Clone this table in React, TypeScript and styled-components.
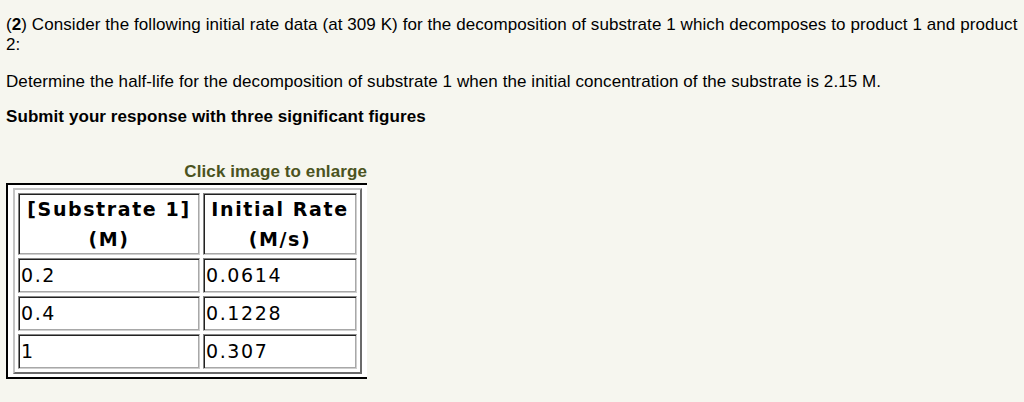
import React from "react";
import styled, { createGlobalStyle } from "styled-components";

const Global = createGlobalStyle`
  html, body { margin: 0; padding: 0; background: #f6f6ef; }
  body { font-family: "Liberation Sans", Arial, Helvetica, sans-serif; color: #000; }
`;

const Page = styled.div`
  display: flex;
  flex-direction: column;
  align-items: flex-start;
  padding: 15px 2px 0 6px;
  width: 1024px;
  box-sizing: border-box;
`;

const Para = styled.p<{ $gap: number; $bold?: boolean }>`
  margin: 0 0 ${(p) => p.$gap}px 0;
  font-size: 17px;
  line-height: 20px;
  letter-spacing: 0.08px;
  font-weight: ${(p) => (p.$bold ? 700 : 400)};
  align-self: stretch;
`;

const Strong = styled.span`
  font-weight: 700;
`;

const Figure = styled.div`
  display: flex;
  flex-direction: column;
  align-items: stretch;
`;

const Caption = styled.div`
  text-align: right;
  font-size: 17px;
  line-height: 20px;
  font-weight: 700;
  letter-spacing: 0.1px;
  color: #4b5320;
  margin-bottom: 1px;
`;

const ImageBox = styled.div`
  background: #fff;
  border-top: 2px solid #000;
  border-left: 2px solid #000;
  border-bottom: 2px solid #000;
  padding: 3px 5px 3px 5px;
`;

const Table = styled.table`
  border-spacing: 3px;
  border-style: solid;
  border-width: 2px;
  border-color: #c4c4c4 #6a6a6a #6a6a6a #c4c4c4;
  font-family: "DejaVu Sans", Verdana, sans-serif;
  font-size: 19px;
  letter-spacing: 1.6px;
  color: #000;
`;

const Cell = styled.td<{ $head?: boolean; $w: number }>`
  width: ${(p) => p.$w}px;
  padding: 0 2px;
  border-style: solid;
  border-width: 1px;
  border-color: #858585 #cfcfcf #cfcfcf #858585;
  box-shadow: inset 1px 1px 0 #222, inset -1px -1px 0 #a8a8a8;
  font-weight: ${(p) => (p.$head ? 700 : 400)};
  text-align: ${(p) => (p.$head ? "center" : "left")};
  line-height: ${(p) => (p.$head ? 30 : 33)}px;
  vertical-align: middle;
  white-space: nowrap;
`;

const rows = [
  ["0.2", "0.0614"],
  ["0.4", "0.1228"],
  ["1", "0.307"],
];

export default function App() {
  return (
    <>
      <Global />
      <Page>
        <Para $gap={17}>
          (<Strong>2</Strong>) Consider the following initial rate data (at 309 K) for the
          decomposition of substrate 1 which decomposes to product 1 and product 2:
        </Para>
        <Para $gap={15}>
          Determine the half-life for the decomposition of substrate 1 when the initial
          concentration of the substrate is 2.15 M.
        </Para>
        <Para $gap={35} $bold>
          Submit your response with three significant figures
        </Para>
        <Figure>
          <Caption>Click image to enlarge</Caption>
          <ImageBox>
            <Table>
              <tbody>
                <tr>
                  <Cell $head $w={176}>
                    [Substrate 1]
                    <br />
                    (M)
                  </Cell>
                  <Cell $head $w={148}>
                    Initial Rate
                    <br />
                    (M/s)
                  </Cell>
                </tr>
                {rows.map((r) => (
                  <tr key={r[0]}>
                    <Cell $w={176}>{r[0]}</Cell>
                    <Cell $w={148}>{r[1]}</Cell>
                  </tr>
                ))}
              </tbody>
            </Table>
          </ImageBox>
        </Figure>
      </Page>
    </>
  );
}
